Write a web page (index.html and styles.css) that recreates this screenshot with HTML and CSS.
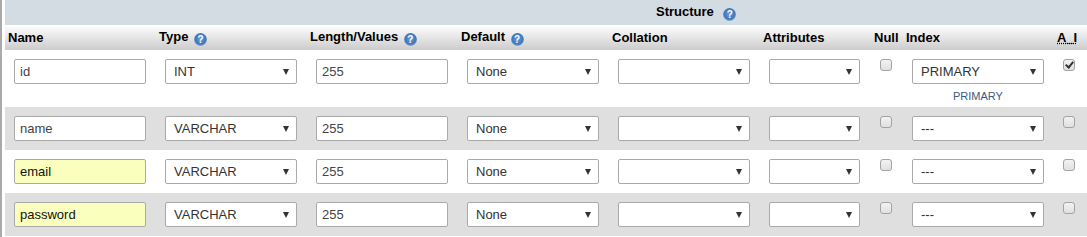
FILE: index.html
```html
<!DOCTYPE html>
<html lang="en">
<head>
  <meta charset="UTF-8">
  <title>Table structure</title>
  <link rel="stylesheet" href="styles.css">
</head>
<body>

  <table class="fields">
    <colgroup>
      <col class="wide"><col class="wide"><col class="wide"><col class="wide"><col class="wide">
      <col class="attr"><col class="null"><col class="wide"><col class="ai">
    </colgroup>
    <thead>
      <tr class="group">
        <th colspan="9">Structure <span class="help">?</span></th>
      </tr>
      <tr class="heads">
        <th>Name</th>
        <th>Type <span class="help">?</span></th>
        <th>Length/Values <span class="help">?</span></th>
        <th>Default <span class="help">?</span></th>
        <th>Collation</th>
        <th>Attributes</th>
        <th>Null</th>
        <th>Index</th>
        <th><abbr title="AUTO_INCREMENT">A_I</abbr></th>
      </tr>
    </thead>
    <tbody>
      <tr>
        <td><input type="text" class="txt" value="id"></td>
        <td><span class="pick"><select><option>INT</option></select></span></td>
        <td><input type="text" class="txt" value="255"></td>
        <td><span class="pick"><select><option>None</option></select></span></td>
        <td><span class="pick"><select><option></option></select></span></td>
        <td><span class="pick short"><select><option></option></select></span></td>
        <td><input type="checkbox" class="box"></td>
        <td>
          <span class="pick"><select><option>PRIMARY</option></select></span>
          <div class="idx_name">PRIMARY</div>
        </td>
        <td><input type="checkbox" class="box" checked></td>
      </tr>
      <tr class="even">
        <td><input type="text" class="txt" value="name"></td>
        <td><span class="pick"><select><option>VARCHAR</option></select></span></td>
        <td><input type="text" class="txt" value="255"></td>
        <td><span class="pick"><select><option>None</option></select></span></td>
        <td><span class="pick"><select><option></option></select></span></td>
        <td><span class="pick short"><select><option></option></select></span></td>
        <td><input type="checkbox" class="box"></td>
        <td><span class="pick"><select><option>---</option></select></span></td>
        <td><input type="checkbox" class="box"></td>
      </tr>
      <tr>
        <td><input type="text" class="txt filled" value="email"></td>
        <td><span class="pick"><select><option>VARCHAR</option></select></span></td>
        <td><input type="text" class="txt" value="255"></td>
        <td><span class="pick"><select><option>None</option></select></span></td>
        <td><span class="pick"><select><option></option></select></span></td>
        <td><span class="pick short"><select><option></option></select></span></td>
        <td><input type="checkbox" class="box"></td>
        <td><span class="pick"><select><option>---</option></select></span></td>
        <td><input type="checkbox" class="box"></td>
      </tr>
      <tr class="even">
        <td><input type="text" class="txt filled" value="password"></td>
        <td><span class="pick"><select><option>VARCHAR</option></select></span></td>
        <td><input type="text" class="txt" value="255"></td>
        <td><span class="pick"><select><option>None</option></select></span></td>
        <td><span class="pick"><select><option></option></select></span></td>
        <td><span class="pick short"><select><option></option></select></span></td>
        <td><input type="checkbox" class="box"></td>
        <td><span class="pick"><select><option>---</option></select></span></td>
        <td><input type="checkbox" class="box"></td>
      </tr>
    </tbody>
  </table>

</body>
</html>
```

FILE: styles.css
```css
html, body {
  overflow: hidden;
}

body {
  margin: 0;
  padding-left: 3px;
  border-left: 2px solid #aaa;
  min-height: 237px;
  box-sizing: border-box;
  background: #fff;
  font-family: "Liberation Sans", Arial, sans-serif;
  font-size: 13px;
  color: #000;
}

.fields {
  border-collapse: collapse;
  table-layout: fixed;
  width: 1082px;
}

.fields col.wide { width: 151px; }
.fields col.attr { width: 111px; }
.fields col.null { width: 32px; }
.fields col.ai { width: 33px; }

.fields th {
  padding: 0 3px;
  font-weight: bold;
  text-align: left;
  white-space: nowrap;
}

.fields tr.group th {
  height: 25px;
  padding-left: 651px;
  background: #d3dce3;
}

.fields tr.heads th {
  height: 25px;
  background: linear-gradient(#fff, #ccc);
}

.fields abbr {
  text-decoration: underline dotted;
}

.help {
  display: inline-block;
  width: 13px;
  height: 13px;
  margin-left: 2px;
  border-radius: 50%;
  background: radial-gradient(circle at 50% 45%, #6f9fd8 0, #3f76ba 55%, #8fb2dd 75%, #c9d9ee 100%);
  color: #fff;
  font-size: 10px;
  line-height: 13px;
  text-align: center;
  vertical-align: -2px;
}

.fields tr.group .help {
  margin-left: 6px;
}

.fields td {
  padding: 9px 3px 4px;
  vertical-align: top;
}

.fields tr.even td {
  background: #dfdfdf;
}

.txt,
.pick select {
  display: block;
  box-sizing: border-box;
  height: 25px;
  margin: 0;
  border: 1px solid #aaa;
  border-radius: 2px;
  background: #fff;
  font-family: "Liberation Sans", Arial, sans-serif;
  font-size: 13px;
  outline: none;
}

.txt {
  width: 132px;
  margin: 0 0 5px 6px;
  padding: 0 5px;
  color: #444;
}

.txt.filled {
  background: #faffbd;
  color: #111;
}

.pick {
  display: block;
  position: relative;
  width: 132px;
  margin: 0 0 5px 6px;
}

.pick.short {
  width: 91px;
}

.pick select {
  width: 100%;
  padding: 0 20px 0 8px;
  appearance: none;
  -webkit-appearance: none;
  color: #333;
}

.pick::after {
  content: "";
  position: absolute;
  right: 8px;
  top: 10px;
  border-left: 3px solid transparent;
  border-right: 3px solid transparent;
  border-top: 6px solid #333;
  pointer-events: none;
}

.idx_name {
  width: 132px;
  margin-left: 6px;
  font-size: 11px;
  line-height: 14px;
  text-align: center;
  color: #3d5a7a;
}

.box {
  display: block;
  position: relative;
  width: 12px;
  height: 12px;
  margin: 0 0 0 6px;
  border: 1px solid #a3a3a3;
  border-radius: 3px;
  background: linear-gradient(#f2f2f2, #e0e0e0);
  appearance: none;
  -webkit-appearance: none;
  box-sizing: border-box;
}

.box:checked::after {
  content: "";
  position: absolute;
  left: 3px;
  top: 0px;
  width: 3px;
  height: 6px;
  border-right: 2px solid #333;
  border-bottom: 2px solid #333;
  transform: rotate(40deg);
}
```
